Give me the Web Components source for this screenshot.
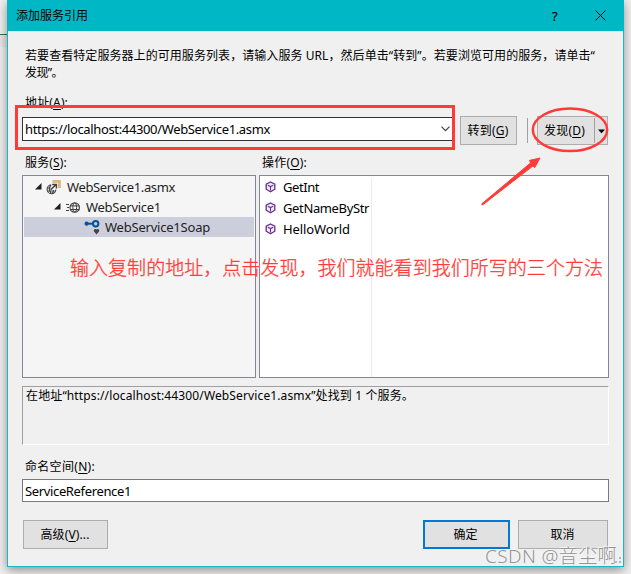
<!DOCTYPE html>
<html lang="zh-CN">
<head>
<meta charset="utf-8">
<title>添加服务引用</title>
<style>
html,body{margin:0;height:574px;overflow:hidden}
body{font:12px "Noto Sans","Noto Sans CJK SC",sans-serif;color:#000;background:#d6d6d6}
</style>
</head>
<body>
<service-app></service-app>
<script>
const define=(name,html,ready)=>customElements.define(name,class extends HTMLElement{
  connectedCallback(){
    if(this.shadowRoot)return;
    this.attachShadow({mode:'open'}).innerHTML=html;
    if(ready)ready.call(this,this.shadowRoot);
  }
});

// One line of text, tracked to occupy the width given in the "w" attribute.
define('ui-text',`<style>:host{display:block;white-space:nowrap;line-height:18px}span{display:inline-block}::slotted(u){text-decoration-thickness:1px;text-underline-offset:2px}</style><span><slot></slot></span>`,function(root){
  const w=+this.getAttribute('w'),s=root.querySelector('span');
  if(w)s.style.letterSpacing=(w-s.getBoundingClientRect().width)/this.textContent.length+'px';
});

define('ui-button',`<style>
:host{display:flex;box-sizing:border-box;height:29px;border:1px solid #adadad;background:#e1e1e1;align-items:center;justify-content:center;padding:1px 1px 0 0}
:host([primary]){border:2px solid #0078d7;padding-right:2px}
</style><slot></slot>`);

define('split-button',`<style>
:host{display:flex;box-sizing:border-box;width:71px;height:29px;border:1px solid #adadad;background:#e1e1e1;align-items:center;padding-left:6px}
i{width:1px;height:25px;background:#a0a0a0;margin-left:auto}
svg{width:12px;height:25px}
</style><slot></slot><i></i><svg viewBox="0 0 12 25"><path d="M3 11.5h7l-3.5 3.8z"/></svg>`);

define('title-bar',`<style>
:host{display:flex;height:31px;box-sizing:border-box;background:#00b7c6;align-items:center;padding:0 18px 0 9px;margin:0 -1px}
svg{width:11px;height:11px}
.q{font-size:13px;margin-left:auto;width:8px;margin-right:35px;line-height:18px;-webkit-text-stroke:.2px #000}
</style><slot></slot><span class="q">?</span><svg viewBox="0 0 11 11"><path d="M.5.5l10 10M10.5.5l-10 10" stroke="#000" fill="none"/></svg>`);

define('combo-box',`<style>
:host{display:flex;box-sizing:border-box;width:431px;height:24px;border:1px solid #333;background:#fff;align-items:center;padding:0 2px}
svg{width:9px;height:6px;margin-left:auto}
</style><slot></slot><svg viewBox="0 0 9 6"><path d="M.5.7l4 4 4-4" stroke="#444" stroke-width="1.2" fill="none"/></svg>`);

define('text-field',`<style>:host{display:flex;box-sizing:border-box;height:23px;border:1px solid #7a7a7a;background:#fff;align-items:center;padding-left:2px}</style><slot></slot>`);

const icons={
asmx:`<svg width="16" height="16" viewBox="0 0 16 16"><path d="M6.5 1h8.3v8H12V3.8H6.500z" fill="#dcb67a"/><g fill="none" stroke="#424242" stroke-width="1.1"><path d="M5.200 5.900a4.400 4.400 0 1 0 4.700 4.700M1 9h3.500M1.500 12h7M5 6.200c-2 2.200-2 5.300 0 8M5.800 14.500c1.200-1 1.900-2.200 2-3.500"/><path d="M4.700 10.800L9.800 5.700M6.200 5.400h4.200v4.200" stroke-width="1.500"/></g></svg>`,
web:`<svg width="16" height="16" viewBox="0 0 16 16"><g fill="none" stroke="#424242"><path d="M1 5.500h3M2 8.500h2M1 11.500h3"/><circle cx="9.700" cy="8.500" r="4.700" stroke-width="1.200"/><path d="M5 6.900h9.500M5 10.500h9.500"/><ellipse cx="9.700" cy="8.500" rx="1.900" ry="4.600"/></g></svg>`,
soap:`<svg width="16" height="16" viewBox="0 0 16 16"><g fill="none" stroke="#00539c" stroke-width="2"><circle cx="11.700" cy="4.700" r="2.700"/><path d="M3 4.700h6"/></g><circle cx="2.600" cy="4.700" r="2.100" fill="#00539c"/><path d="M12.500 15.500l-2.600-3.200a1.600 1.600 0 0 1 2.600-1.800 1.600 1.600 0 0 1 2.600 1.800z" fill="#424242"/></svg>`,
cube:`<svg width="12" height="12" viewBox="0 0 12 12"><path d="M5.500 1L9.800 3.200v5L5.500 10.800 1.200 8.200v-5z" fill="#f3edf8" stroke="#652d90" stroke-width="1.300"/><path d="M2.800 4.200l2.700 1.400 2.700-1.400M5.500 5.600v4" fill="none" stroke="#652d90" stroke-width="1.100"/></svg>`
};
define('ui-icon',`<style>:host{display:block;flex:none}svg{display:block}</style>`,function(r){r.innerHTML+=icons[this.getAttribute('name')]});

define('tree-row',`<style>
:host{display:flex;box-sizing:border-box;height:20px;align-items:center;color:#1e1e1e;font-size:13px;padding:0 0 1px 11px}
:host([level="2"]){padding-left:30px}
:host([level="3"]){padding-left:60px;background:#cccedb}
.t{width:7px;height:7px;margin-right:4px}
:host([level="3"]) .t{display:none}
</style><svg class="t" viewBox="0 0 7 7"><path d="M6.500 0v6.500H0z" fill="#1e1e1e"/></svg><slot name="icon"></slot><slot></slot>`);

define('list-row',`<style>:host{display:flex;height:21px;align-items:center;gap:6px;padding-left:4px;font-size:13px}</style><ui-icon name="cube"></ui-icon><slot></slot>`);

define('list-pane',`<style>
:host{display:block;box-sizing:border-box;height:203px;border:1px solid #828790;background:#fff;padding:1px}
:host([tree]){background:#f5f5f5}
:host([columns]){padding-top:0;background:linear-gradient(#e5edf7,#e5edf7) 111px 2px/1px 199px no-repeat #fff}
</style><slot></slot>`);

define('status-box',`<style>:host{display:block;box-sizing:border-box;height:59px;border:1px solid;border-color:#a0a0a0 #fff #fff #a0a0a0;padding:0 3px}</style><slot></slot>`);

define('service-dialog',`<style>
:host{display:block;box-sizing:border-box;width:617px;height:567px;margin-left:7px;border:1px solid #18b7c4;border-top:0;background:#f0f0f0;box-shadow:0 3px 10px rgba(0,0,0,.42)}
.body{padding:16px 14px 0}
.intro{padding-left:3px;height:47px}
.intro ui-text{line-height:17px}
.lab{padding-left:3px}
.address{display:flex;height:29px;margin-top:4px;align-items:flex-start}
.address combo-box{margin-top:1px}
.address ui-button{width:57px;margin-left:7px}
.sep{width:1px;height:25px;background:#a0a0a0;margin:2px 9px 0 10px}
.labels,.lists{display:grid;grid-template-columns:234px 350px;gap:3px}
.labels{margin-top:9px;height:21px}
status-box{margin-top:8px}
.ns{margin-top:13px;height:21px}
.actions{display:flex;margin:18px 1px 0}
</style>
<title-bar><ui-text w="72">添加服务引用</ui-text></title-bar>
<div class="body">
<div class="intro"><ui-text w="570">若要查看特定服务器上的可用服务列表，请输入服务 URL，然后单击“转到”。若要浏览可用的服务，请单击“</ui-text><ui-text w="38">发现”。</ui-text></div>
<ui-text class="lab" w="43">地址(<u>A</u>):</ui-text>
<div class="address"><combo-box><ui-text w="245" style="font-size:13px">https://localhost:44300/WebService1.asmx</ui-text></combo-box><ui-button><ui-text w="41">转到(<u>G</u>)</ui-text></ui-button><span class="sep"></span><split-button><ui-text w="41">发现(<u>D</u>)</ui-text></split-button></div>
<div class="labels"><ui-text class="lab" w="42">服务(<u>S</u>):</ui-text><ui-text class="lab" w="45">操作(<u>O</u>):</ui-text></div>
<div class="lists">
<list-pane tree>
<tree-row><ui-icon slot="icon" name="asmx"></ui-icon><ui-text w="108" style="margin-left:5px">WebService1.asmx</ui-text></tree-row>
<tree-row level="2"><ui-icon slot="icon" name="web"></ui-icon><ui-text w="75" style="margin-left:5px">WebService1</ui-text></tree-row>
<tree-row level="3"><ui-icon slot="icon" name="soap"></ui-icon><ui-text w="105" style="margin-left:5px">WebService1Soap</ui-text></tree-row>
</list-pane>
<list-pane columns>
<list-row><ui-text w="36">GetInt</ui-text></list-row><list-row><ui-text w="86">GetNameByStr</ui-text></list-row><list-row><ui-text w="67">HelloWorld</ui-text></list-row>
</list-pane>
</div>
<status-box><ui-text w="388">在地址“https://localhost:44300/WebService1.asmx”处找到 1 个服务。</ui-text></status-box>
<ui-text class="lab ns" w="70">命名空间(<u>N</u>):</ui-text>
<text-field><ui-text w="106" style="font-size:13px">ServiceReference1</ui-text></text-field>
<div class="actions"><ui-button style="width:85px"><ui-text w="49">高级(<u>V</u>)...</ui-text></ui-button><ui-button primary style="width:87px;margin-left:315px"><ui-text w="24">确定</ui-text></ui-button><ui-button style="width:90px;margin-left:8px"><ui-text w="24">取消</ui-text></ui-button></div>
</div>`);

define('mark-layer',`<style>
:host{position:absolute;inset:0;width:631px;height:574px}
svg{position:absolute;inset:0}
.note{position:absolute;left:70px;top:253px;font-size:19px;line-height:28px;color:#ff3b37;font-weight:300;-webkit-text-stroke:.3px #ff3b37;font-family:"Noto Sans CJK SC",sans-serif}
.sign{position:absolute;left:485px;top:544px;font-size:19px;line-height:24px;font-weight:300;color:#949494;text-shadow:-1px -1px 0 #f8f8f8}
</style>
<svg width="631" height="574" viewBox="0 0 631 574">
<rect x="16.500" y="106.500" width="437" height="42" fill="none" stroke="#ff3b37" stroke-width="3"/>
<ellipse cx="570" cy="129.800" rx="37.200" ry="21.300" fill="none" stroke="#ff3b37" stroke-width="2.500"/>
<path d="M481.500 204L530.500 163l-1-2.600 10.500-2.400-5.200 9.500-2-1.400L482.500 205z" fill="#ff3b37" stroke="#ff3b37" stroke-linejoin="round"/>
<path d="M619 557h2v2h-2zM615 561h2v2h-2zM619 561h2v2h-2z" fill="#b5b5b5"/>
</svg>
<ui-text class="note" w="533">输入复制的地址，点击发现，我们就能看到我们所写的三个方法</ui-text>
<ui-text class="sign" w="132">CSDN @音尘啊</ui-text>`);

define('service-app',`<style>
:host{display:block;position:relative;width:631px;height:574px;overflow:hidden;background:linear-gradient(#2f7d32,#2f7d32) 0 34px/7px 1px no-repeat,linear-gradient(#e7e7e7,#e7e7e7) 0 35px/7px 12px no-repeat,#f0f0f0}
</style><service-dialog></service-dialog><mark-layer></mark-layer>`);
</script>
</body>
</html>
